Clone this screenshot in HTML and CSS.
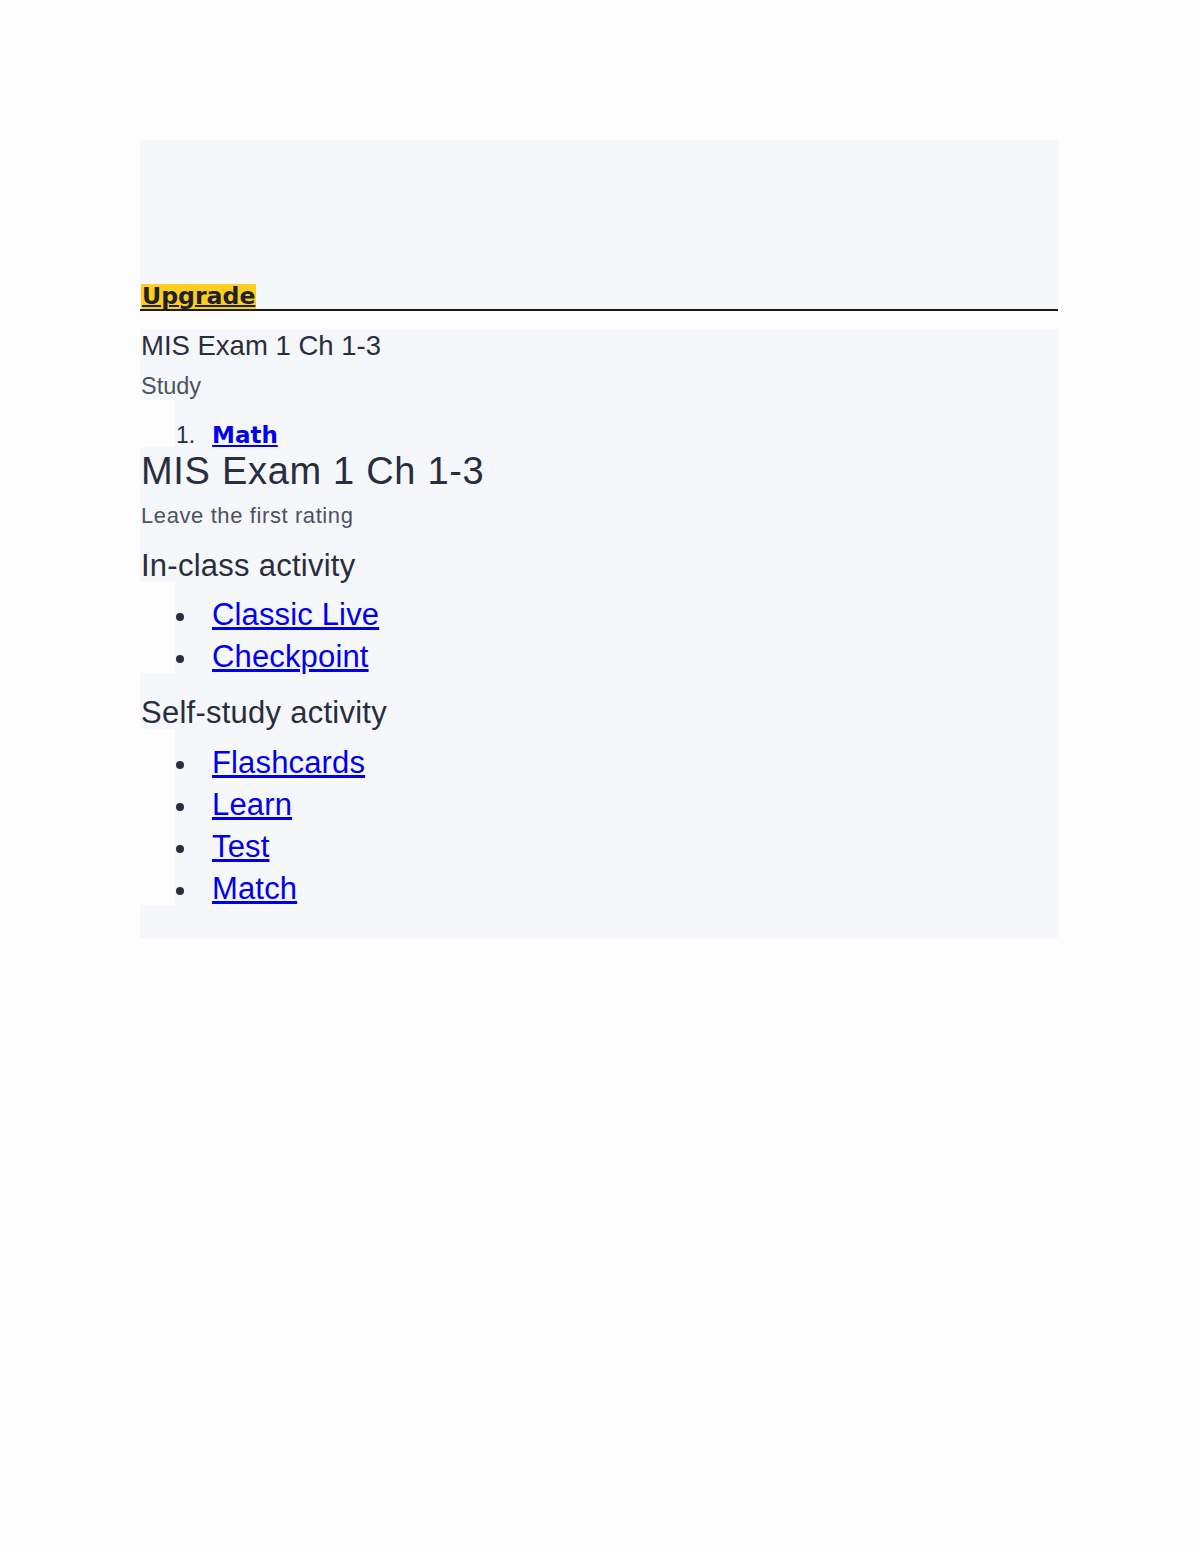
FILE: index.html
```html
<!DOCTYPE html>
<html lang="en">
<head>
<meta charset="utf-8">
<title>MIS Exam 1 Ch 1-3</title>
<link rel="stylesheet" href="styles.css">
</head>
<body>
<div class="page">
  <header class="topbar">
    <a class="upgrade" href="#">Upgrade</a>
  </header>
  <main class="main">
    <div class="set-title">MIS Exam 1 Ch 1-3</div>
    <div class="subtitle">Study</div>
    <ol class="crumbs">
      <li><a href="#">Math</a></li>
    </ol>
    <h1 class="heading">MIS Exam 1 Ch 1-3</h1>
    <div class="rating">Leave the first rating</div>
    <h2 class="section section-first">In-class activity</h2>
    <ul class="acts acts-first">
      <li><a href="#">Classic Live</a></li>
      <li><a href="#">Checkpoint</a></li>
    </ul>
    <h2 class="section section-second">Self-study activity</h2>
    <ul class="acts acts-second">
      <li><a href="#">Flashcards</a></li>
      <li><a href="#">Learn</a></li>
      <li><a href="#">Test</a></li>
      <li><a href="#">Match</a></li>
    </ul>
  </main>
</div>
</body>
</html>
```

FILE: styles.css
```css
html, body {
  margin: 0;
  padding: 0;
  background: #fdfdfe;
}

body {
  font-family: "Liberation Sans", Arial, sans-serif;
  color: #282e3e;
}

.page {
  width: 918px;
  margin: 0 0 0 140px;
  padding-top: 140px;
}

.topbar {
  height: 169px;
  background: #f6f7fb;
  border-bottom: 2px solid #1c1c1c;
  display: flex;
  align-items: flex-end;
  padding-left: 1px;
}

.upgrade {
  display: inline-block;
  height: 25px;
  line-height: 25px;
  padding: 0 1px;
  background: #ffcd1f;
  color: #1d2130;
  font-family: "DejaVu Sans", Verdana, sans-serif;
  font-weight: bold;
  font-size: 23.6px;
  text-decoration: underline;
  text-decoration-thickness: 2px;
}

.main {
  margin-top: 18px;
  background: #f6f7fb;
  padding-bottom: 33px;
}

.set-title {
  font-size: 27.5px;
  line-height: 34px;
  padding-left: 1px;
}

.subtitle {
  font-size: 23.5px;
  line-height: 27px;
  padding-top: 10px;
  padding-left: 1px;
  color: #4d5262;
}

.crumbs {
  list-style: none;
  margin: 0;
  padding: 0;
  border-left: 35px solid #fdfdfe;
  counter-reset: crumb;
}

.crumbs li {
  counter-increment: crumb;
  font-size: 23px;
  line-height: 24px;
  padding-top: 23px;
}

.crumbs li::before {
  content: counter(crumb) ".";
  display: inline-block;
  width: 36px;
  margin-left: 1px;
}

.crumbs a {
  font-family: "DejaVu Sans", Verdana, sans-serif;
  font-weight: bold;
  font-size: 23px;
  color: #0000ee;
  line-height: 24px;
}

.heading {
  margin: 0;
  font-weight: normal;
  font-size: 38px;
  letter-spacing: 0.7px;
  line-height: 46px;
  padding-top: 1px;
  padding-left: 1px;
}

.rating {
  font-size: 22px;
  letter-spacing: 0.6px;
  line-height: 28px;
  padding-top: 8px;
  padding-left: 1px;
  color: #4d5262;
}

.section {
  margin: 0;
  font-weight: normal;
  font-size: 31px;
  letter-spacing: 0.25px;
  line-height: 33px;
  padding-left: 1px;
}

.section-first {
  padding-top: 19px;
}

.section-second {
  padding-top: 23px;
}

.acts {
  list-style: none;
  margin: 0;
  padding: 0;
  border-left: 35px solid #fdfdfe;
}

.acts-first {
  padding-top: 16px;
}

.acts-second {
  padding-top: 17px;
}

.acts li {
  font-size: 31px;
  line-height: 33px;
  padding-top: 9px;
}

.acts li:first-child {
  padding-top: 0;
}

.acts li::before {
  content: "";
  display: inline-block;
  width: 8px;
  height: 8px;
  border-radius: 50%;
  background: #282e3e;
  margin-left: 1px;
  margin-right: 28px;
  vertical-align: 4px;
}

.acts a {
  color: #0000ee;
  letter-spacing: 0.15px;
  text-decoration: underline;
}
```
